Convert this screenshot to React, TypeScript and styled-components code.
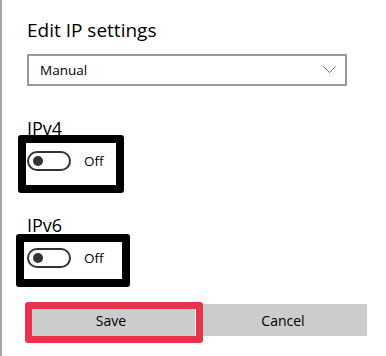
import styled, { createGlobalStyle } from 'styled-components';

const GlobalStyle = createGlobalStyle`
  html, body {
    margin: 0;
    padding: 0;
    background: #ffffff;
  }
  body {
    font-family: 'Open Sans', 'Noto Sans', sans-serif;
    color: #000000;
  }
`;

const Panel = styled.div`
  box-sizing: border-box;
  width: 386px;
  height: 356px;
  border-left: 2px solid #a6a6a6;
  padding: 17px 0 0 25px;
  overflow: hidden;
`;

const Title = styled.h1`
  margin: 0;
  font-size: 19px;
  line-height: 26px;
  font-weight: 400;
`;

const Select = styled.div`
  box-sizing: border-box;
  margin-top: 11px;
  width: 320px;
  height: 32px;
  border: 2px solid #999999;
  padding: 0 9px 0 11px;
  display: flex;
  align-items: center;
  justify-content: space-between;
  font-size: 13.5px;
`;

const SectionLabel = styled.div<{ $gap: number }>`
  margin-top: ${(p) => p.$gap}px;
  font-size: 18px;
  line-height: 24px;
`;

const Highlight = styled.div<{ $w: number; $pad: string; $shift: number; $lift: number }>`
  position: relative;
  box-sizing: border-box;
  width: ${(p) => p.$w}px;
  margin-left: ${(p) => p.$shift}px;
  margin-top: ${(p) => p.$lift}px;
  border: 8px solid #000000;
  border-radius: 3px;
  padding: ${(p) => p.$pad};
  background: #ffffff;
`;

const ToggleRow = styled.div`
  display: flex;
  align-items: center;
  gap: 13px;
  font-size: 13.5px;
`;

const Track = styled.div`
  box-sizing: border-box;
  width: 44px;
  height: 20px;
  border: 2px solid #333333;
  border-radius: 10px;
  display: flex;
  align-items: center;
  padding-left: 4px;
`;

const Knob = styled.div`
  width: 10px;
  height: 10px;
  border-radius: 50%;
  background: #333333;
`;

const Buttons = styled.div`
  position: relative;
  margin-top: 17px;
  display: flex;
  gap: 4px;
  width: 340px;
`;

const Button = styled.button`
  flex: 1;
  height: 32px;
  border: none;
  background: #cccccc;
  font-family: 'Open Sans', 'Noto Sans', sans-serif;
  font-size: 14px;
  color: #000000;
  padding: 0;
`;

const RedMark = styled.div`
  position: absolute;
  left: -2px;
  top: -2px;
  box-sizing: border-box;
  width: 178px;
  height: 41px;
  border: 7px solid #e8334a;
  border-radius: 3px;
  pointer-events: none;
`;

function Toggle() {
  return (
    <ToggleRow>
      <Track>
        <Knob />
      </Track>
      <span>Off</span>
    </ToggleRow>
  );
}

export default function App() {
  return (
    <>
      <GlobalStyle />
      <Panel>
        <Title>Edit IP settings</Title>
        <Select>
          <span>Manual</span>
          <svg width="13" height="8" viewBox="0 0 13 8">
            <polyline points="0.5,0.5 6.5,6.5 12.5,0.5" fill="none" stroke="#707070" strokeWidth="1" />
          </svg>
        </Select>
        <SectionLabel $gap={30}>IPv4</SectionLabel>
        <Highlight $w={106} $pad="8px 0 14px 1px" $shift={-9} $lift={-5}>
          <Toggle />
        </Highlight>
        <SectionLabel $gap={20}>IPv6</SectionLabel>
        <Highlight $w={114} $pad="6px 0 11px 3px" $shift={-11} $lift={-3}>
          <Toggle />
        </Highlight>
        <Buttons>
          <Button>Save</Button>
          <Button>Cancel</Button>
          <RedMark />
        </Buttons>
      </Panel>
    </>
  );
}
